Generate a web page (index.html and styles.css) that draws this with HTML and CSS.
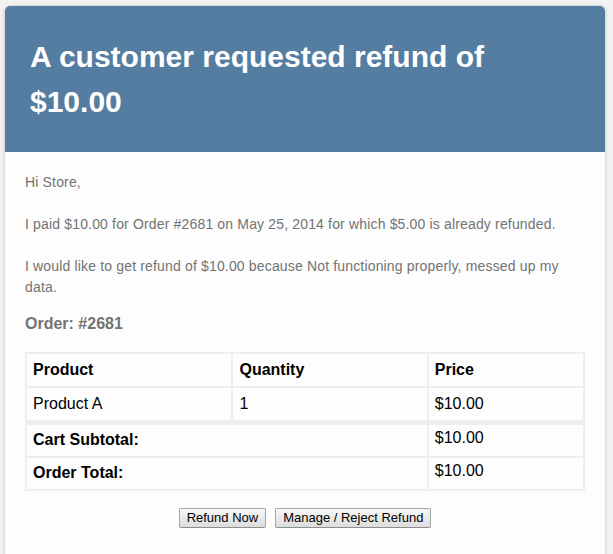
FILE: index.html
```html
<!DOCTYPE html>
<html lang="en">
<head>
  <meta charset="UTF-8">
  <meta name="viewport" content="width=device-width, initial-scale=1.0">
  <title>Refund Request</title>
  <link rel="stylesheet" href="styles.css">
</head>
<body>

<div class="mail">
  <div class="mail-header">
    <h1>A customer requested refund of $10.00</h1>
  </div>

  <div class="mail-body">
    <p>Hi Store,<br><br>I paid $10.00 for Order #2681 on May 25, 2014 for which $5.00 is already refunded.<br><br>I would like to get refund of $10.00 because Not functioning properly, messed up my data.</p>

    <h2>Order: #2681</h2>

    <table class="order-table" cellspacing="0" cellpadding="0">
      <thead>
        <tr>
          <th class="col-product">Product</th>
          <th class="col-qty">Quantity</th>
          <th class="col-price">Price</th>
        </tr>
      </thead>
      <tbody>
        <tr>
          <td>Product A</td>
          <td>1</td>
          <td>$10.00</td>
        </tr>
      </tbody>
      <tfoot>
        <tr class="first">
          <th colspan="2">Cart Subtotal:</th>
          <td>$10.00</td>
        </tr>
        <tr>
          <th colspan="2">Order Total:</th>
          <td>$10.00</td>
        </tr>
      </tfoot>
    </table>

    <div class="actions">
      <button class="btn">Refund Now</button>
      <button class="btn">Manage / Reject Refund</button>
    </div>
  </div>
</div>

</body>
</html>
```

FILE: styles.css
```css
* { box-sizing: border-box; }
body {
  margin: 0;
  padding: 5px 4px;
  background: #f2f2f2;
  font-family: "Liberation Sans", Arial, sans-serif;
}

.mail {
  width: 602px;
  background: #fdfdfd;
  border: 1px solid #dcdcdc;
  border-radius: 6px;
  box-shadow: 0 1px 4px rgba(0, 0, 0, 0.08);
  overflow: hidden;
}

.mail-header { background: #557da1; padding: 28px 25px; }
.mail-header h1 {
  margin: 0;
  color: #fff;
  font-size: 30px;
  font-weight: 700;
  line-height: 150%;
}

.mail-body { padding: 20px 20px 40px; color: #737373; font-size: 14px; line-height: 150%; }
.mail-body p { margin: 0 0 16px; letter-spacing: 0.16px; }
.mail-body h2 { margin: 0 0 17px; font-size: 16px; line-height: 130%; color: #737373; }

.order-table {
  width: 100%;
  border: 1px solid #eee;
  border-collapse: separate;
  color: #000;
  font-size: 16px;
  line-height: 20px;
}
.order-table th, .order-table td {
  border: 1px solid #eee;
  padding: 6px;
  text-align: left;
  vertical-align: middle;
}
.order-table td { font-weight: 400; }
.order-table .col-product { width: 37%; }
.order-table .col-qty { width: 35%; }
.order-table .col-price { width: 28%; }
.order-table tfoot .first th, .order-table tfoot .first td { border-top-width: 4px; }
.order-table tfoot th, .order-table tfoot td { padding: 5px 6px 6px; }
.order-table tfoot td { padding: 3px 6px 8px; }

.actions { margin-top: 17px; display: flex; justify-content: center; gap: 9px; }
.btn {
  font-family: "Liberation Sans", Arial, sans-serif;
  font-size: 13px;
  color: #000;
  height: 20px;
  padding: 0 7px;
  background: linear-gradient(#f8f8f8, #dcdcdc);
  border: 1px solid #a6a6a6;
  border-bottom-color: #8e8e8e;
  border-radius: 2px;
}
```
